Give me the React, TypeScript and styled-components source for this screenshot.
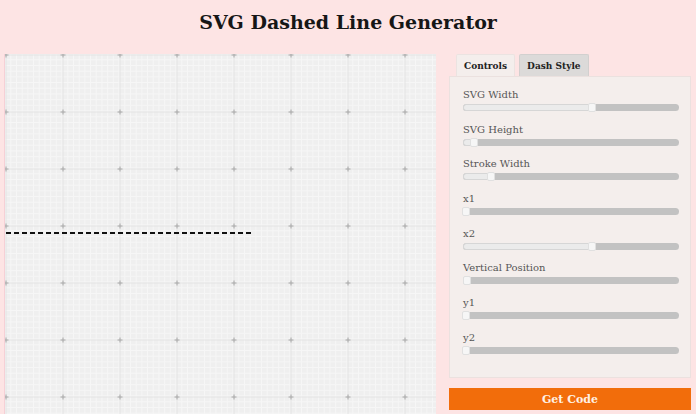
import styled, { createGlobalStyle } from 'styled-components';

const GlobalStyle = createGlobalStyle`
  html, body {
    margin: 0;
    padding: 0;
    background: #fde4e4;
    font-family: "DejaVu Serif", "Liberation Serif", serif;
  }
`;

const controls = [
  { label: 'SVG Width', value: 0.59 },
  { label: 'SVG Height', value: 0.04 },
  { label: 'Stroke Width', value: 0.12 },
  { label: 'x1', value: 0 },
  { label: 'x2', value: 0.59 },
  { label: 'Vertical Position', value: 0.01 },
  { label: 'y1', value: 0 },
  { label: 'y2', value: 0 },
];

const MAJOR = 57;
const W = 431;
const H = 362;

const Grid = () => {
  const minors = [];
  for (let i = 0; i * 5.7 < W; i++) {
    minors.push(<line key={'v' + i} x1={i * 5.7} y1={0} x2={i * 5.7} y2={H} stroke="#f6f6f6" strokeWidth={1} />);
  }
  for (let i = 0; i * 5.7 < H; i++) {
    minors.push(<line key={'h' + i} x1={0} y1={i * 5.7} x2={W} y2={i * 5.7} stroke="#f6f6f6" strokeWidth={1} />);
  }
  const majors = [];
  const crosses = [];
  for (let x = 1; x < W; x += MAJOR) {
    majors.push(<line key={'mv' + x} x1={x} y1={0} x2={x} y2={H} stroke="#e4e4e4" strokeWidth={1} />);
    for (let y = 1; y < H; y += MAJOR) {
      crosses.push(
        <path key={'c' + x + '-' + y} d={`M${x - 2.5} ${y}H${x + 2.5}M${x} ${y - 2.5}V${y + 2.5}`} stroke="#a8a8a8" strokeWidth={1} />
      );
    }
  }
  for (let y = 1; y < H; y += MAJOR) {
    majors.push(<line key={'mh' + y} x1={0} y1={y} x2={W} y2={y} stroke="#e4e4e4" strokeWidth={1} />);
  }
  return (
    <svg width={W} height={H} viewBox={`0 0 ${W} ${H}`}>
      <rect width={W} height={H} fill="#efefef" />
      {minors}
      {majors}
      {crosses}
      <line x1={1} y1={179} x2={249} y2={179} stroke="#111" strokeWidth={2} strokeDasharray="5 3" />
    </svg>
  );
};

export default function App() {
  return (
    <>
      <GlobalStyle />
      <Page>
        <Title>SVG Dashed Line Generator</Title>
        <Main>
          <Canvas>
            <Grid />
          </Canvas>
          <Side>
            <Tabs>
              <Tab $active>Controls</Tab>
              <Tab>Dash Style</Tab>
            </Tabs>
            <Panel>
              {controls.map((c) => (
                <Field key={c.label}>
                  <Label>{c.label}</Label>
                  <Track>
                    <Fill style={{ width: `${c.value * 100}%` }} />
                    <Thumb />
                  </Track>
                </Field>
              ))}
            </Panel>
            <CodeButton>Get Code</CodeButton>
          </Side>
        </Main>
      </Page>
    </>
  );
}

const Page = styled.div`
  width: 696px;
  height: 414px;
  overflow: hidden;
`;

const Title = styled.h1`
  margin: 0;
  height: 54px;
  line-height: 44px;
  text-align: center;
  font-size: 19px;
  font-weight: 700;
  color: #161616;
`;

const Main = styled.div`
  display: flex;
  gap: 13px;
  padding-left: 4px;
`;

const Canvas = styled.div`
  width: 431px;
  height: 362px;
  border-left: 1px solid #f6d0d6;
  svg {
    display: block;
  }
`;

const Side = styled.div`
  width: 242px;
  display: flex;
  flex-direction: column;
`;

const Tabs = styled.div`
  display: flex;
  gap: 4px;
  padding-left: 7px;
  height: 22px;
`;

const Tab = styled.div<{ $active?: boolean }>`
  padding: 0 7px;
  display: flex;
  align-items: center;
  font-size: 9px;
  font-weight: 700;
  color: #222;
  background: ${(p) => (p.$active ? '#f4eeec' : '#dcdad9')};
  border: 1px solid ${(p) => (p.$active ? '#ebe3e1' : '#d2d0cf')};
  border-bottom: none;
  border-radius: 2px 2px 0 0;
`;

const Panel = styled.div`
  background: #f4eeec;
  border: 1px solid #ebe1df;
  padding: 11px 10px 14px 13px;
  display: flex;
  flex-direction: column;
  gap: 11.7px;
  height: 302px;
  box-sizing: border-box;
`;

const Field = styled.div`
  display: flex;
  flex-direction: column;
  gap: 2px;
`;

const Label = styled.div`
  font-size: 10px;
  color: #555;
  line-height: 14px;
`;

const Track = styled.div`
  position: relative;
  height: 7px;
  width: 216px;
  border-radius: 4px;
  background: #c2c2c2;
  display: flex;
  align-items: center;
`;

const Fill = styled.div`
  height: 100%;
  background: #ebebeb;
  border: 1px solid #d6d6d6;
  border-right: none;
  border-radius: 4px 0 0 4px;
  box-sizing: border-box;
`;

const Thumb = styled.div`
  width: 8px;
  height: 9px;
  background: #f6f6f6;
  border: 1px solid #e0e0e0;
  box-sizing: border-box;
  border-radius: 2px;
  margin-left: -2px;
`;

const CodeButton = styled.button`
  margin-top: 10px;
  height: 22px;
  width: 242px;
  border: none;
  background: #f26d0b;
  color: #fff2e6;
  font-family: "DejaVu Serif", serif;
  font-size: 11px;
  font-weight: 700;
`;
